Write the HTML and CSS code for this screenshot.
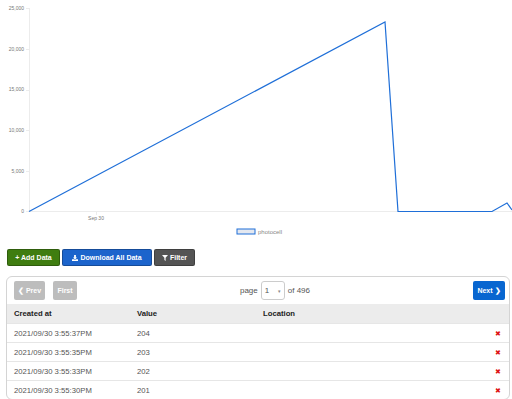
FILE: index.html
```html
<!DOCTYPE html>
<html lang="en">
<head>
    <meta charset="UTF-8">
    <title>photocell</title>
    <link rel="stylesheet" href="styles.css">
</head>
<body>
    <div class="chart">
        <svg width="512" height="249" viewBox="0 0 512 249">
            <g class="axis">
                <line x1="29.5" y1="8" x2="29.5" y2="211.5"></line>
                <line x1="29" y1="211.5" x2="512" y2="211.5"></line>
                <line x1="96.5" y1="211" x2="96.5" y2="215"></line>
                <line x1="26" y1="8.5" x2="29" y2="8.5"></line>
                <line x1="26" y1="49.5" x2="29" y2="49.5"></line>
                <line x1="26" y1="90.5" x2="29" y2="90.5"></line>
                <line x1="26" y1="130.5" x2="29" y2="130.5"></line>
                <line x1="26" y1="171.5" x2="29" y2="171.5"></line>
                <line x1="26" y1="211.5" x2="29" y2="211.5"></line>
            </g>
            <g class="ticks">
                <text x="24" y="10">25,000</text>
                <text x="24" y="50.5">20,000</text>
                <text x="24" y="91">15,000</text>
                <text x="24" y="132">10,000</text>
                <text x="24" y="172.5">5,000</text>
                <text x="24" y="213">0</text>
            </g>
            <text class="xlabel" x="96" y="220">Sep 30</text>
            <polyline class="series" points="29,211.5 385,22 398,211.5 492,211.5 507,203 512,210"></polyline>
            <rect class="legend-box" x="237" y="229" width="18" height="5"></rect>
            <text class="legend-text" x="258" y="233.5">photocell</text>
        </svg>
    </div>

    <div class="toolbar">
        <button class="btn btn-green">+ Add Data</button>
        <button class="btn btn-blue">
            <svg class="ico" viewBox="0 0 10 10"><path d="M3.5 0h3v4h2L5 7.5 1.5 4h2z"/><path d="M0 7h3.5L5 8.5 6.5 7H10v3H0z"/></svg>
            Download All Data
        </button>
        <button class="btn btn-dark">
            <svg class="ico" viewBox="0 0 10 10"><path d="M0 0h10L6 4.5V10L4 8.5V4.5z"/></svg>
            Filter
        </button>
    </div>

    <div class="panel">
        <div class="pager">
            <div class="pager-left">
                <span class="pbtn pbtn-prev">&#10094; Prev</span>
                <span class="pbtn pbtn-first">First</span>
            </div>
            <div class="pager-mid">
                page
                <span class="select">1 <span class="caret">&#9662;</span></span>
                of 496
            </div>
            <span class="pbtn pbtn-next">Next &#10095;</span>
        </div>
        <table class="data">
            <tr>
                <th class="c-date">Created at</th>
                <th class="c-val">Value</th>
                <th>Location</th>
                <th class="c-del"></th>
            </tr>
            <tr>
                <td>2021/09/30 3:55:37PM</td>
                <td>204</td>
                <td></td>
                <td class="c-del"><span class="del">&#10006;</span></td>
            </tr>
            <tr>
                <td>2021/09/30 3:55:35PM</td>
                <td>203</td>
                <td></td>
                <td class="c-del"><span class="del">&#10006;</span></td>
            </tr>
            <tr>
                <td>2021/09/30 3:55:33PM</td>
                <td>202</td>
                <td></td>
                <td class="c-del"><span class="del">&#10006;</span></td>
            </tr>
            <tr>
                <td>2021/09/30 3:55:30PM</td>
                <td>201</td>
                <td></td>
                <td class="c-del"><span class="del">&#10006;</span></td>
            </tr>
        </table>
    </div>
</body>
</html>
```

FILE: styles.css
```css
body {
    margin: 0;
    font-family: 'Liberation Sans', Arial, sans-serif;
    background: #ffffff;
    color: #333333;
    overflow: hidden;
}

.chart svg {
    display: block;
}

.axis line {
    stroke: #ececec;
    stroke-width: 1;
}

.ticks text {
    font-size: 5px;
    fill: #777777;
    text-anchor: end;
}

.xlabel {
    font-size: 5px;
    fill: #777777;
    text-anchor: middle;
}

.series {
    fill: none;
    stroke: #1f6fd8;
    stroke-width: 1.2;
}

.legend-box {
    fill: #e4e8f0;
    stroke: #1f6fd8;
    stroke-width: 1;
}

.legend-text {
    font-size: 6px;
    fill: #888888;
}

.toolbar {
    display: flex;
    gap: 2px;
    margin-left: 7px;
}

.btn {
    display: flex;
    align-items: center;
    justify-content: center;
    gap: 2px;
    height: 17px;
    padding: 0;
    border: 1px solid rgba(0, 0, 0, 0.25);
    border-radius: 2px;
    color: #ffffff;
    font-family: 'Liberation Sans', Arial, sans-serif;
    font-size: 7px;
    font-weight: bold;
}

.btn-green {
    background: #3f7d10;
    width: 53px;
}

.btn-blue {
    background: #1c64cc;
    width: 90px;
}

.btn-dark {
    background: #545454;
    width: 41px;
}

.ico {
    width: 6px;
    height: 6px;
    fill: #ffffff;
}

.panel {
    margin: 10px 2px 0 6px;
    border: 1px solid #d4d4d4;
    border-radius: 6px;
    overflow: hidden;
}

.pager {
    display: flex;
    justify-content: space-between;
    align-items: center;
    padding: 4px 4px 4px 7px;
    height: 19px;
}

.pager-left {
    display: flex;
    gap: 8px;
}

.pbtn {
    display: flex;
    align-items: center;
    justify-content: center;
    height: 19px;
    border-radius: 2px;
    font-size: 7px;
    font-weight: bold;
    color: #ffffff;
}

.pbtn-prev {
    background: #bdbdbd;
    width: 31px;
}

.pbtn-first {
    background: #bdbdbd;
    width: 24px;
}

.pbtn-next {
    background: #0866d0;
    width: 32px;
}

.pager-mid {
    display: flex;
    align-items: center;
    gap: 3px;
    font-size: 8px;
    color: #555555;
}

.select {
    display: flex;
    align-items: center;
    justify-content: space-between;
    width: 16px;
    height: 17px;
    padding: 0 3px;
    border: 1px solid #cccccc;
    border-radius: 3px;
    font-size: 8px;
}

.caret {
    font-size: 5px;
    color: #888888;
}

.data {
    width: 100%;
    border-collapse: collapse;
    font-size: 7.7px;
}

.data th {
    background: #ececec;
    color: #222222;
    font-weight: 600;
    text-align: left;
    height: 19px;
    padding: 0 0 0 7px;
}

.data td {
    height: 18px;
    padding: 0 0 0 7px;
    color: #555555;
    border-top: 1px solid #e6e6e6;
}

.c-date {
    width: 116px;
}

.c-val {
    width: 119px;
}

.c-del {
    width: 14px;
}

.del {
    color: #dd1111;
    font-size: 7px;
}
```
